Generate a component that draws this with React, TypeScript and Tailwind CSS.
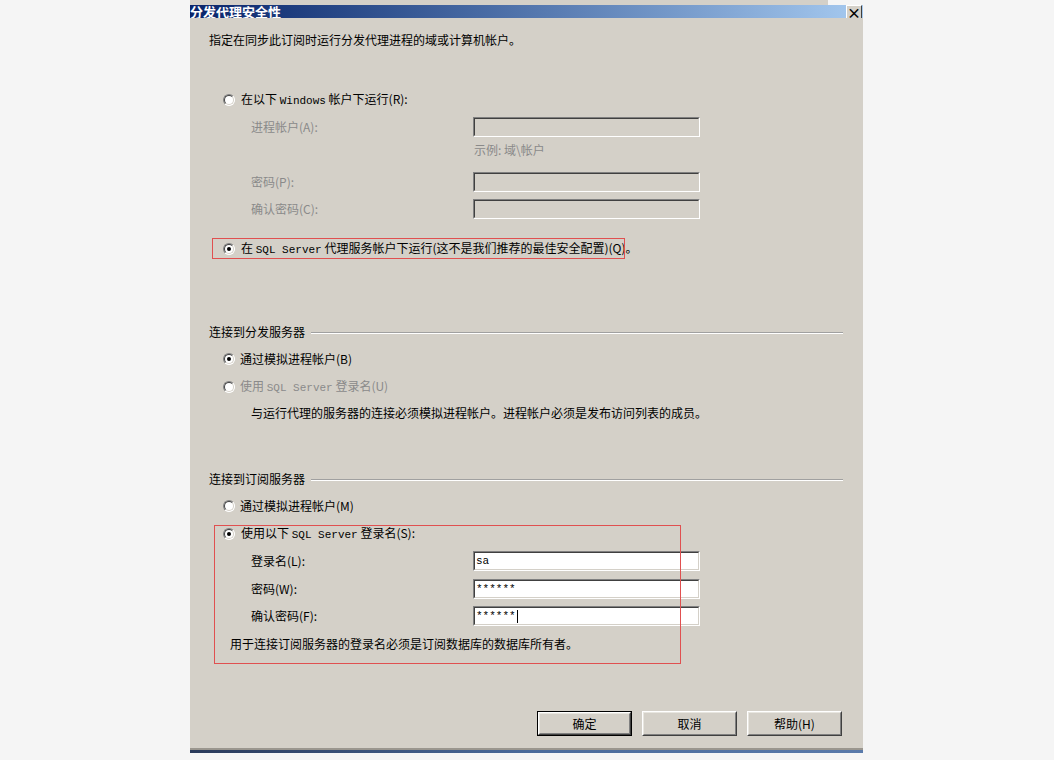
import React from 'react'

const cjk = { fontFamily: '"Noto Sans CJK SC", "Liberation Sans", sans-serif' }
const mono = 'font-["Liberation_Mono",monospace] text-[11px]'

function Radio({ checked = false, disabled = false }: { checked?: boolean; disabled?: boolean }) {
  return (
    <span className="relative inline-flex h-[12px] w-[12px] shrink-0 items-center justify-center rounded-full border border-t-[#808080] border-l-[#808080] border-r-white border-b-white bg-white">
      <span className="absolute inset-0 rounded-full border border-t-[#404040] border-l-[#404040] border-r-[#d4d0c8] border-b-[#d4d0c8]" />
      {checked && <span className={`h-[4px] w-[4px] rounded-full ${disabled ? 'bg-[#808080]' : 'bg-black'}`} />}
    </span>
  )
}

function Field({ value, disabled = false, caret = false }: { value?: string; disabled?: boolean; caret?: boolean }) {
  return (
    <div
      className={`flex h-[20px] w-[227px] items-center border border-t-[#808080] border-l-[#808080] border-r-white border-b-white ${
        disabled ? 'bg-[#d4d0c8]' : 'bg-white'
      }`}
    >
      <div className="flex h-full w-full items-center border border-t-[#404040] border-l-[#404040] border-r-[#d4d0c8] border-b-[#d4d0c8] pl-[1px] font-['Liberation_Mono',monospace] text-[11px] text-black">
        {value}
        {caret && <span className="ml-[1px] h-[13px] w-[1px] bg-black" />}
      </div>
    </div>
  )
}

function Row({ label, disabled, children, className = '' }: { label: React.ReactNode; disabled?: boolean; children: React.ReactNode; className?: string }) {
  return (
    <div className={`flex h-[20px] items-center ${className}`}>
      <div className={`w-[283px] shrink-0 pl-[61px] ${disabled ? 'text-[#8a8a8a]' : 'text-black'}`}>{label}</div>
      {children}
    </div>
  )
}

function Section({ title, className = '' }: { title: string; className?: string }) {
  return (
    <div className={`flex h-[18px] items-center pl-[19px] pr-[20px] ${className}`}>
      <span>{title}</span>
      <div className="ml-[6px] mt-[2px] flex-1 border-t border-b border-t-[#a0a0a0] border-b-white" />
    </div>
  )
}

function Btn({ children, def = false }: { children: React.ReactNode; def?: boolean }) {
  return (
    <div className={`h-[25px] w-[95px] ${def ? 'border border-black' : ''}`}>
      <div className="flex h-full w-full items-center justify-center border border-t-white border-l-white border-r-[#404040] border-b-[#404040]">
        <div className="flex h-full w-full items-center justify-center border border-t-[#e8e6e0] border-l-[#e8e6e0] border-r-[#808080] border-b-[#808080]">
          {children}
        </div>
      </div>
    </div>
  )
}

export default function App() {
  return (
    <div className="h-[760px] w-[1054px] overflow-hidden bg-[#f5f5f5] text-[12px] text-black" style={cjk}>
      <div className="ml-[190px] flex w-[673px] flex-col">
        <div className="h-[5px] w-[638px] bg-[#d4d0c8]" />
        {/* title bar */}
        <div className="flex h-[13px] items-center bg-gradient-to-r from-[#0a246a] to-[#a6caf0]">
          <span className="text-[13px] font-bold leading-none text-white">分发代理安全性</span>
          <div className="ml-auto mr-[1px] flex h-[14px] w-[16px] items-center justify-center border border-t-white border-l-white border-r-[#404040] border-b-[#404040] bg-[#d4d0c8] text-[14px] font-bold leading-none">
            ×
          </div>
        </div>

        {/* body */}
        <div className="flex h-[730px] flex-col bg-[#d4d0c8]">
          <div className="mt-[12px] flex h-[20px] items-center pl-[19px]">指定在同步此订阅时运行分发代理进程的域或计算机帐户。</div>

          <div className="mt-[40px] flex h-[20px] items-center gap-[6px] pl-[33px]">
            <Radio />
            <span>
              在以下 <span className={mono}>Windows</span> 帐户下运行(R):
            </span>
          </div>
          <Row label="进程帐户(A):" disabled className="mt-[7px]">
            <Field disabled />
          </Row>
          <div className="mt-[4px] flex h-[18px] items-center pl-[284px] text-[#8a8a8a]">示例: 域\帐户</div>
          <Row label="密码(P):" disabled className="mt-[13px]">
            <Field disabled />
          </Row>
          <Row label="确认密码(C):" disabled className="mt-[7px]">
            <Field disabled />
          </Row>

          <div className="relative mt-[19px] flex h-[21px] items-center gap-[6px] pl-[33px]">
            <Radio checked />
            <span>
              在 <span className={mono}>SQL Server</span> 代理服务帐户下运行(这不是我们推荐的最佳安全配置)(Q)。
            </span>
            <div className="pointer-events-none absolute left-[22px] top-0 h-[21px] w-[413px] border border-[#e05050]" />
          </div>

          <Section title="连接到分发服务器" className="mt-[64px]" />
          <div className="mt-[9px] flex h-[18px] items-center gap-[5px] pl-[33px]">
            <Radio checked />
            <span>通过模拟进程帐户(B)</span>
          </div>
          <div className="mt-[10px] flex h-[18px] items-center gap-[5px] pl-[33px] text-[#8a8a8a]">
            <Radio />
            <span>
              使用 <span className={mono}>SQL Server</span> 登录名(U)
            </span>
          </div>
          <div className="mt-[8px] flex h-[18px] items-center pl-[61px]">与运行代理的服务器的连接必须模拟进程帐户。进程帐户必须是发布访问列表的成员。</div>

          <Section title="连接到订阅服务器" className="mt-[48px]" />
          <div className="mt-[9px] flex h-[18px] items-center gap-[5px] pl-[33px]">
            <Radio />
            <span>通过模拟进程帐户(M)</span>
          </div>

          <div className="relative mt-[10px] flex h-[139px] flex-col">
            <div className="flex h-[18px] items-center gap-[6px] pl-[33px]">
              <Radio checked />
              <span>
                使用以下 <span className={mono}>SQL Server</span> 登录名(S):
              </span>
            </div>
            <Row label="登录名(L):" className="mt-[8px]">
              <Field value="sa" />
            </Row>
            <Row label="密码(W):" className="mt-[8px]">
              <Field value="******" />
            </Row>
            <Row label="确认密码(F):" className="mt-[7px]">
              <Field value="******" caret />
            </Row>
            <div className="mt-[9px] flex h-[18px] items-center pl-[40px]">用于连接订阅服务器的登录名必须是订阅数据库的数据库所有者。</div>
            <div className="pointer-events-none absolute left-[24px] top-0 h-[139px] w-[467px] border border-[#e05050]" />
          </div>

          <div className="mt-[47px] flex gap-[10px] pl-[347px]">
            <Btn def>确定</Btn>
            <Btn>取消</Btn>
            <Btn>帮助(H)</Btn>
          </div>
        </div>
        <div className="h-[2px] bg-[#9a968e]" />
        <div className="h-[3px] bg-gradient-to-r from-[#2a3a5a] via-[#4a6a9a] to-[#5a7aaa]" />
      </div>
    </div>
  )
}
